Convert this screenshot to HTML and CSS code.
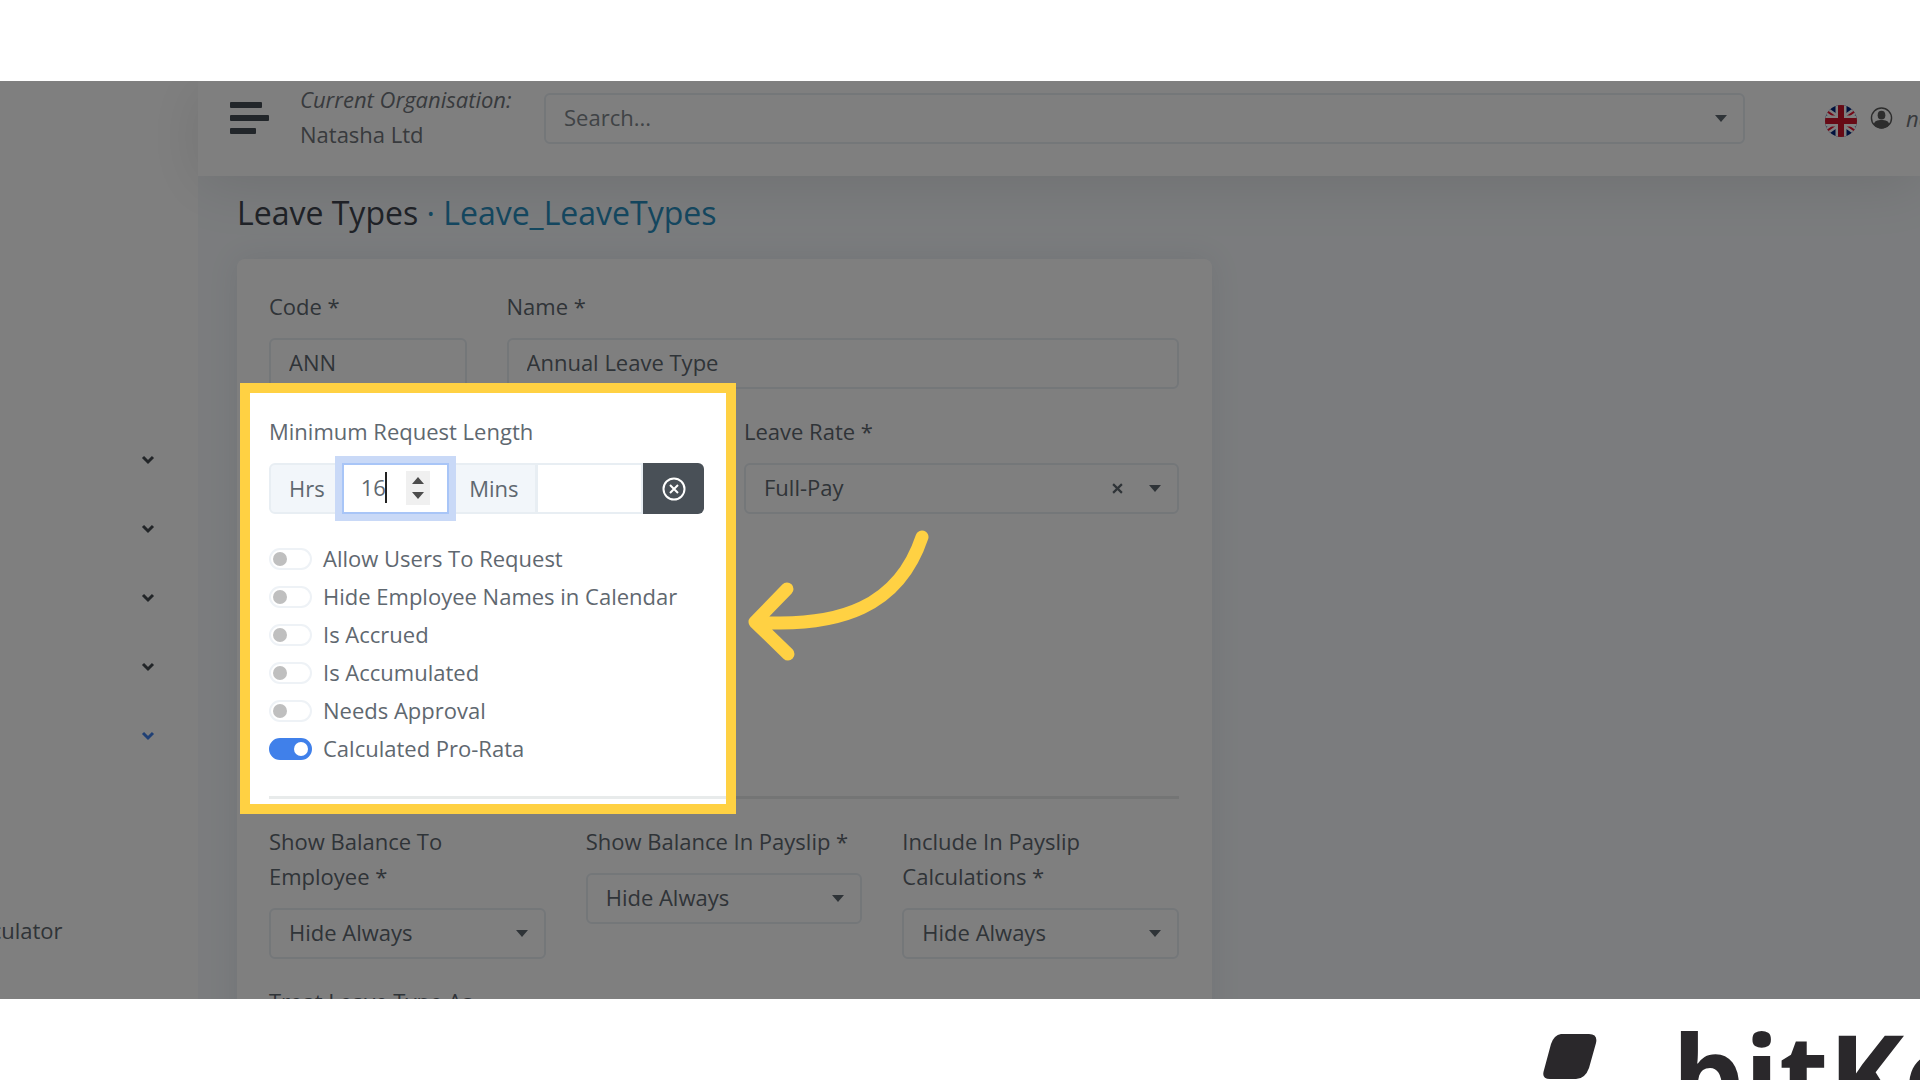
FILE: index.html
```html
<!DOCTYPE html>
<html lang="en">
<head>
  <meta charset="UTF-8">
  <meta name="viewport" content="width=device-width, initial-scale=1.0">
  <title>Leave Types</title>
  <link rel="stylesheet" href="styles.css">
</head>
<body>
  <div class="stage">
    <nav class="sidebar">
      <button class="nav-item" aria-label="Expand section"><svg class="chevron" viewBox="0 0 12 8"><path d="M1 1l5 5 5-5"/></svg></button>
      <button class="nav-item" aria-label="Expand section"><svg class="chevron" viewBox="0 0 12 8"><path d="M1 1l5 5 5-5"/></svg></button>
      <button class="nav-item" aria-label="Expand section"><svg class="chevron" viewBox="0 0 12 8"><path d="M1 1l5 5 5-5"/></svg></button>
      <button class="nav-item" aria-label="Expand section"><svg class="chevron" viewBox="0 0 12 8"><path d="M1 1l5 5 5-5"/></svg></button>
      <button class="nav-item active" aria-label="Collapse section"><svg class="chevron" viewBox="0 0 12 8"><path d="M1 1l5 5 5-5"/></svg></button>
      <a class="nav-link" href="#">Calculator</a>
    </nav>

    <div class="page">
      <header class="topbar">
        <button class="menu-btn" aria-label="Menu">
          <span class="bar"></span>
          <span class="bar bar-long"></span>
          <span class="bar bar-short"></span>
        </button>
        <div class="org"><em>Current Organisation:</em><br>Natasha Ltd</div>
        <div class="control search">
          <input class="field" type="text" placeholder="Search..." aria-label="Search">
          <svg class="caret" viewBox="0 0 12 7"><path d="M0 0h12L6 7z"/></svg>
        </div>
        <div class="user">
          <svg class="flag" viewBox="0 0 32 32">
            <defs><clipPath id="round"><circle cx="16" cy="16" r="16"/></clipPath></defs>
            <g clip-path="url(#round)">
              <path fill="#00247d" d="M0 0h32v32H0z"/>
              <path stroke="#fff" stroke-width="7" d="M-4 2l40 28M-4 30L36 2"/>
              <path stroke="#e8112d" stroke-width="2" d="M-4 2l40 28M-4 30L36 2"/>
              <path stroke="#fff" stroke-width="11" d="M16 0v32M0 16h32"/>
              <path stroke="#cf142b" stroke-width="6" d="M16 0v32M0 16h32"/>
            </g>
          </svg>
          <svg class="avatar" viewBox="0 0 24 24">
            <circle cx="12" cy="12" r="10.5" fill="none" stroke="#5a5a5a" stroke-width="1.5"/>
            <ellipse cx="12" cy="9" rx="4" ry="4.5"/>
            <path d="M4 19c0-4 4-5 8-5s8 1 8 5c-2 2.500-5 4-8 4s-6-1.500-8-4z"/>
          </svg>
          <em>natasha</em>
        </div>
      </header>

      <main class="content">
        <h1 class="title">Leave Types <a href="#">· Leave_LeaveTypes</a></h1>

        <form class="card">
          <div class="col-3">
            <label class="label" for="code">Code *</label>
            <input class="field" id="code" type="text" value="ANN">
          </div>
          <div class="col-9">
            <label class="label" for="name">Name *</label>
            <input class="field" id="name" type="text" value="Annual Leave Type">
          </div>

          <div class="col-6">
            <label class="label" for="hrs">Minimum Request Length</label>
            <div class="input-group">
              <label class="addon" for="hrs">Hrs</label>
              <div class="number focused">
                <input class="field" id="hrs" type="number" value="16">
                <span class="text-cursor"></span>
                <svg class="spinner" viewBox="0 0 24 34">
                  <path fill="#f0f0f0" d="M0 0h24v34H0z"/>
                  <path fill="#4d4d4d" d="M6 13l6-7 6 7zM6 21l6 7 6-7z"/>
                </svg>
              </div>
              <label class="addon addon-mid" for="mins">Mins</label>
              <div class="number">
                <input class="field" id="mins" type="number">
              </div>
              <button class="clear-btn" type="button" aria-label="Clear">
                <svg viewBox="0 0 24 24"><circle cx="12" cy="12" r="10.500"/><path d="M8 8l8 8M16 8l-8 8"/></svg>
              </button>
            </div>
          </div>
          <div class="col-6">
            <label class="label" for="rate">Leave Rate *</label>
            <div class="control">
              <select class="field" id="rate"><option>Full-Pay</option></select>
              <button class="remove" type="button" aria-label="Remove"><svg viewBox="0 0 10 10"><path d="M1 1l8 8M9 1L1 9"/></svg></button>
              <svg class="caret" viewBox="0 0 12 7"><path d="M0 0h12L6 7z"/></svg>
            </div>
          </div>

          <div class="switches">
            <label class="switch"><input type="checkbox">Allow Users To Request</label>
            <label class="switch"><input type="checkbox">Hide Employee Names in Calendar</label>
            <label class="switch"><input type="checkbox">Is Accrued</label>
            <label class="switch"><input type="checkbox">Is Accumulated</label>
            <label class="switch"><input type="checkbox">Needs Approval</label>
            <label class="switch"><input type="checkbox" checked>Calculated Pro-Rata</label>
          </div>

          <hr class="divider">

          <div class="col-4">
            <label class="label" for="balance">Show Balance To Employee *</label>
            <div class="control">
              <select class="field" id="balance"><option>Hide Always</option></select>
              <svg class="caret" viewBox="0 0 12 7"><path d="M0 0h12L6 7z"/></svg>
            </div>
          </div>
          <div class="col-4">
            <label class="label" for="payslip">Show Balance In Payslip *</label>
            <div class="control">
              <select class="field" id="payslip"><option>Hide Always</option></select>
              <svg class="caret" viewBox="0 0 12 7"><path d="M0 0h12L6 7z"/></svg>
            </div>
          </div>
          <div class="col-4">
            <label class="label" for="include">Include In Payslip Calculations *</label>
            <div class="control">
              <select class="field" id="include"><option>Hide Always</option></select>
              <svg class="caret" viewBox="0 0 12 7"><path d="M0 0h12L6 7z"/></svg>
            </div>
          </div>

          <div class="col-4">
            <label class="label" for="treat">Treat Leave Type As</label>
            <select class="field" id="treat"><option>Leave</option></select>
          </div>
        </form>
      </main>
    </div>

    <!-- spotlight and arrow over the form -->
    <div class="spotlight"></div>
    <svg class="arrow" viewBox="0 0 182 132">
      <path d="M173 7C150 76 92 98 6 92M38 59L6 92l33 32"/>
    </svg>
  </div>

  <footer class="brand">
    <svg class="brand-mark" viewBox="0 0 54 46">
      <path d="M18 0h28q9 0 7 9l-7 25q-4 11-13 11H7Q-2 45 1 36L8 10Q11 1 18 0z"/>
    </svg>
    <span class="brand-name">bitKea</span>
  </footer>
</body>
</html>
```
FILE: styles.css
```css
* {
  box-sizing: border-box;
}
body {
  margin: 0;
  height: 100vh;
  display: grid;
  grid-template-rows: 81px minmax(0, 1fr) 81px;
  overflow: hidden;
  background: #fff;
  color: #5f6870;
  font-family: "Open Sans", "Noto Sans", sans-serif;
  font-size: 22px;
  line-height: 35px;
}
input, select, button {
  font: inherit;
  color: inherit;
}
button {
  padding: 0;
  border: 0;
  background: none;
}

.stage {
  grid-row: 2;
  position: relative;
  display: flex;
  overflow: hidden;
  background: #f6f9fc;
}

/* sidebar */
.sidebar {
  flex: none;
  width: 280px;
  margin-left: -82px;
  padding-top: 344px;
  background: #fff;
}
.nav-item {
  display: flex;
  align-items: center;
  justify-content: flex-end;
  width: 100%;
  height: 69px;
  padding-right: 44px;
  color: #454a50;
}
.nav-item.active {
  color: #4080ea;
}
.chevron {
  width: 12px;
  height: 8px;
  fill: none;
  stroke: currentColor;
  stroke-width: 3;
  overflow: visible;
}
.nav-link {
  display: block;
  margin-top: 143px;
  padding-left: 41px;
  color: inherit;
  text-decoration: none;
}

/* top bar */
.page {
  flex: 1;
  min-width: 0;
}
.topbar {
  position: relative;
  display: flex;
  align-items: flex-start;
  height: 95px;
  padding-left: 32px;
  background: #fff;
  box-shadow: 0 8px 60px rgba(0, 0, 0, 0.1);
}
.menu-btn {
  display: flex;
  flex-direction: column;
  align-items: flex-start;
  gap: 7px;
  flex: none;
  width: 70px;
  padding-top: 21px;
}
.bar {
  width: 32px;
  height: 6px;
  border-radius: 1px;
  background: #454c54;
}
.bar-long {
  width: 39px;
}
.bar-short {
  width: 26px;
}
.org {
  flex: none;
  width: 244px;
  padding-top: 1px;
  color: #70757a;
}
.search {
  flex: 1;
  margin-top: 12px;
}
.search .field::placeholder {
  color: #80868c;
  opacity: 1;
}
.user {
  display: flex;
  align-items: flex-start;
  gap: 13px;
  flex: none;
  width: 175px;
  padding-left: 80px;
  padding-top: 20px;
  overflow: hidden;
  color: #70757a;
}
.flag {
  flex: none;
  width: 32px;
  height: 40px;
}
.avatar {
  flex: none;
  width: 23px;
  height: 34px;
  fill: #5a5a5a;
}

/* form */
.content {
  padding: 14px 39px;
}
.title {
  margin: 0 0 24px;
  color: #40454f;
  font-size: 32px;
  font-weight: 400;
  line-height: 45px;
}
.title a {
  color: #2a8fc0;
  text-decoration: none;
}
.card {
  display: grid;
  grid-template-columns: repeat(12, minmax(0, 1fr));
  column-gap: 40px;
  row-gap: 25px;
  max-width: 975px;
  padding: 30px 33px 30px 32px;
  border-radius: 8px;
  background: #fff;
  box-shadow: 0 0 30px rgba(60, 80, 110, 0.1);
}
.col-3 {
  grid-column: span 3;
}
.col-4 {
  grid-column: span 4;
}
.col-6 {
  grid-column: span 6;
}
.col-9 {
  grid-column: span 9;
}
.label {
  display: block;
  margin-bottom: 14px;
}
.field {
  display: block;
  width: 100%;
  height: 51px;
  padding: 0 18px 3px;
  border: 2px solid #e8eef3;
  border-radius: 6px;
  outline: none;
  background: #fff;
  appearance: none;
}
.control {
  position: relative;
}
.caret {
  position: absolute;
  right: 18px;
  top: 22px;
  width: 12px;
  height: 7px;
  fill: #5f6870;
}
.remove {
  position: absolute;
  right: 56px;
  top: 20px;
  width: 11px;
  height: 11px;
}
.remove svg {
  display: block;
  fill: none;
  stroke: #5f6870;
  stroke-width: 2;
}

.input-group {
  display: flex;
  height: 51px;
}
.addon {
  padding: 6px 16px 6px 18px;
  border: 2px solid #e8eef3;
  border-right-width: 1px;
  border-radius: 6px 0 0 6px;
  background: #f2f6fa;
}
.addon-mid {
  border-radius: 0;
}
.number {
  position: relative;
  flex: 1;
}
.number .field {
  padding-left: 17px;
  border-radius: 0;
}
.number ::-webkit-inner-spin-button {
  appearance: none;
}
.focused {
  z-index: 1;
  box-shadow: 0 0 0 7px #c9d9f7;
}
.focused .field {
  border-color: #a8c5f7;
}
.text-cursor {
  position: absolute;
  left: 43px;
  top: 9px;
  width: 2px;
  height: 31px;
  background: #222;
}
.spinner {
  position: absolute;
  right: 19px;
  top: 8px;
  width: 24px;
  height: 34px;
}
.clear-btn {
  display: flex;
  align-items: center;
  justify-content: center;
  flex: none;
  width: 61px;
  border-radius: 0 6px 6px 0;
  background: #495057;
}
.clear-btn svg {
  width: 24px;
  height: 24px;
  fill: none;
  stroke: #fff;
  stroke-width: 2;
}

.switches {
  grid-column: 1 / -1;
}
.switch {
  display: flex;
  align-items: center;
  gap: 11px;
  line-height: 38px;
}
.switch input {
  appearance: none;
  display: flex;
  align-items: center;
  width: 43px;
  height: 22px;
  margin: 2px 0 0;
  padding: 0 2px;
  border: 2px solid #eef2f6;
  border-radius: 11px;
  background: #fff;
}
.switch input::before {
  content: "";
  width: 14px;
  height: 14px;
  border-radius: 50%;
  background: #bfbfbf;
}
.switch input:checked {
  justify-content: flex-end;
  border-color: #4080ea;
  background: #4080ea;
}
.switch input:checked::before {
  background: #fff;
}
.divider {
  grid-column: 1 / -1;
  width: 100%;
  height: 3px;
  margin: 4px 0 0;
  border: 0;
  background: #e8ebeb;
}

/* spotlight */
.spotlight {
  position: absolute;
  z-index: 2;
  left: 240px;
  top: 302px;
  width: 496px;
  height: 431px;
  border: 10px solid #ffd143;
  box-shadow: 0 0 0 3000px rgba(0, 0, 0, 0.5);
  pointer-events: none;
}
.arrow {
  position: absolute;
  z-index: 3;
  left: 749px;
  top: 449px;
  width: 182px;
  height: 132px;
  overflow: visible;
  fill: none;
  stroke: #ffd143;
  stroke-width: 13;
  stroke-linecap: round;
  stroke-linejoin: round;
}

/* brand strip */
.brand {
  grid-row: 3;
  display: flex;
  align-items: flex-start;
  justify-content: flex-end;
  gap: 75px;
  overflow: hidden;
  color: #2a282b;
}
.brand-mark {
  flex: none;
  width: 54px;
  height: 46px;
  margin-top: 35px;
  fill: currentColor;
}
.brand-name {
  flex: none;
  width: 248px;
  font-size: 114px;
  font-weight: 700;
  line-height: 150px;
}
```
